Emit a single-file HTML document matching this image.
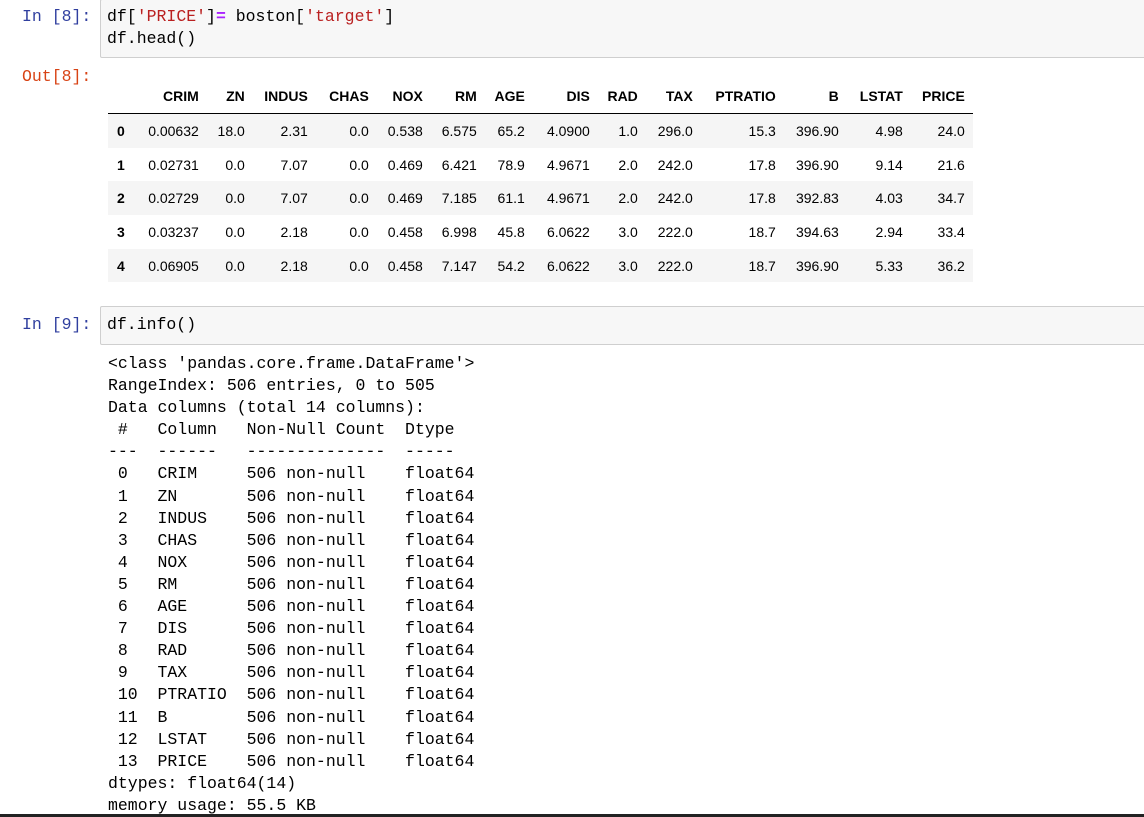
<!DOCTYPE html>
<html><head><style>
body{margin:0;width:1144px;height:817px;background:#fff;position:relative;overflow:hidden;font-family:"Liberation Mono",monospace;}
.p{position:absolute;font-size:16.5px;line-height:22px;white-space:pre;}
.in{color:#303f9f;}
.out{color:#d84315;}
.box{position:absolute;left:100px;right:-2px;background:#f7f7f7;border:1px solid #cfcfcf;border-radius:2px;}
.code{color:#000;}
.s{color:#ba2121;}
.o{color:#aa22ff;font-weight:bold;}
table{position:absolute;left:108px;top:79px;border-collapse:collapse;font-family:"Liberation Sans",sans-serif;font-size:14px;color:#000;table-layout:fixed;}
th,td{text-align:right;padding:0 8px 0 0;white-space:nowrap;}
th{font-weight:bold;height:34px;}
td{height:33.7px;}
thead tr{border-bottom:1px solid #000;}
tbody tr:nth-child(odd){background:#f5f5f5;}
td.i{font-weight:bold;text-align:left;padding-left:9px;}
</style></head><body>
<div class="box" style="top:-1px;height:57px;"></div>
<div class="p in" style="left:22px;top:6px;">In [8]:</div>
<div class="p code" style="left:107px;top:6px;">df[<span class="s">'PRICE'</span>]<span class="o">=</span> boston[<span class="s">'target'</span>]
df.head()</div>
<div class="p out" style="left:22px;top:66px;">Out[8]:</div>
<table>
<colgroup><col style="width:22px"><col style="width:74px"><col style="width:46px"><col style="width:63px"><col style="width:61px"><col style="width:54px"><col style="width:54px"><col style="width:48px"><col style="width:65px"><col style="width:48px"><col style="width:55px"><col style="width:83px"><col style="width:63px"><col style="width:64px"><col style="width:62px"></colgroup>
<thead><tr><th></th><th>CRIM</th><th>ZN</th><th>INDUS</th><th>CHAS</th><th>NOX</th><th>RM</th><th>AGE</th><th>DIS</th><th>RAD</th><th>TAX</th><th>PTRATIO</th><th>B</th><th>LSTAT</th><th>PRICE</th></tr></thead>
<tbody>
<tr><td class="i">0</td><td>0.00632</td><td>18.0</td><td>2.31</td><td>0.0</td><td>0.538</td><td>6.575</td><td>65.2</td><td>4.0900</td><td>1.0</td><td>296.0</td><td>15.3</td><td>396.90</td><td>4.98</td><td>24.0</td></tr>
<tr><td class="i">1</td><td>0.02731</td><td>0.0</td><td>7.07</td><td>0.0</td><td>0.469</td><td>6.421</td><td>78.9</td><td>4.9671</td><td>2.0</td><td>242.0</td><td>17.8</td><td>396.90</td><td>9.14</td><td>21.6</td></tr>
<tr><td class="i">2</td><td>0.02729</td><td>0.0</td><td>7.07</td><td>0.0</td><td>0.469</td><td>7.185</td><td>61.1</td><td>4.9671</td><td>2.0</td><td>242.0</td><td>17.8</td><td>392.83</td><td>4.03</td><td>34.7</td></tr>
<tr><td class="i">3</td><td>0.03237</td><td>0.0</td><td>2.18</td><td>0.0</td><td>0.458</td><td>6.998</td><td>45.8</td><td>6.0622</td><td>3.0</td><td>222.0</td><td>18.7</td><td>394.63</td><td>2.94</td><td>33.4</td></tr>
<tr><td class="i">4</td><td>0.06905</td><td>0.0</td><td>2.18</td><td>0.0</td><td>0.458</td><td>7.147</td><td>54.2</td><td>6.0622</td><td>3.0</td><td>222.0</td><td>18.7</td><td>396.90</td><td>5.33</td><td>36.2</td></tr>
</tbody></table>
<div class="box" style="top:306px;height:37px;"></div>
<div class="p in" style="left:22px;top:314px;">In [9]:</div>
<div class="p code" style="left:107px;top:314px;">df.info()</div>
<div class="p code" style="left:108px;top:353px;line-height:22.1px;">&lt;class 'pandas.core.frame.DataFrame'&gt;
RangeIndex: 506 entries, 0 to 505
Data columns (total 14 columns):
 #   Column   Non-Null Count  Dtype  
---  ------   --------------  -----  
 0   CRIM     506 non-null    float64
 1   ZN       506 non-null    float64
 2   INDUS    506 non-null    float64
 3   CHAS     506 non-null    float64
 4   NOX      506 non-null    float64
 5   RM       506 non-null    float64
 6   AGE      506 non-null    float64
 7   DIS      506 non-null    float64
 8   RAD      506 non-null    float64
 9   TAX      506 non-null    float64
 10  PTRATIO  506 non-null    float64
 11  B        506 non-null    float64
 12  LSTAT    506 non-null    float64
 13  PRICE    506 non-null    float64
dtypes: float64(14)
memory usage: 55.5 KB</div>
<div style="position:absolute;left:0;top:814px;width:1144px;height:3px;background:#222;"></div>
</body></html>
